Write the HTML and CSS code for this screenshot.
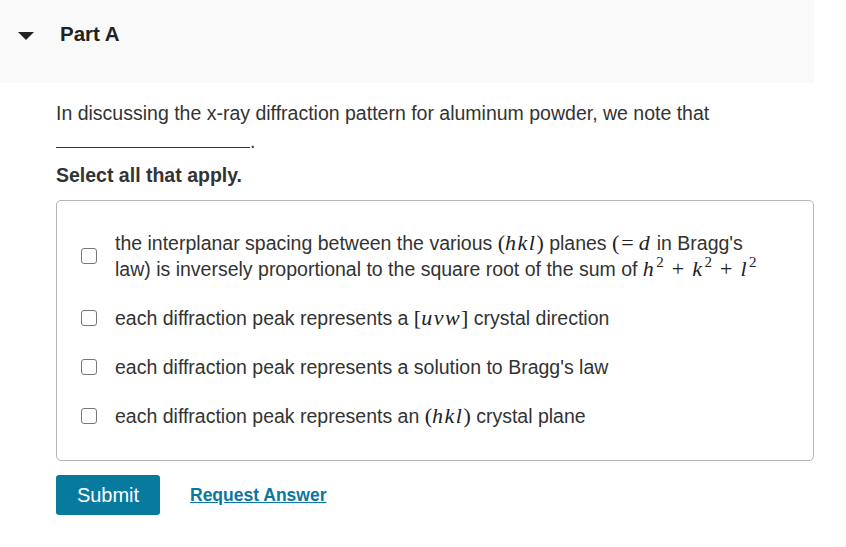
FILE: index.html
```html
<!DOCTYPE html>
<html>
<head>
<meta charset="utf-8">
<link rel="stylesheet" href="styles.css">
</head>
<body>
<div class="header">
  <span class="caret"></span>
  <span class="part">Part A</span>
</div>
<div class="content">
  <p class="question">In discussing the x-ray diffraction pattern for aluminum powder, we note that<br><span class="blank"></span>.</p>
  <p class="instr">Select all that apply.</p>
  <div class="box">
    <label class="opt">
      <span class="cb"></span>
      <span class="txt">the interplanar spacing between the various <span class="m">(<i>hkl</i>)</span> planes <span class="m">(<span class="rel">=</span><i>d</i></span> in Bragg's law) is inversely proportional to the square root of the sum of <span class="m"><i>h</i><sup>2</sup><span class="bin">+</span><i>k</i><sup>2</sup><span class="bin">+</span><i>l</i><sup>2</sup></span></span>
    </label>
    <label class="opt">
      <span class="cb"></span>
      <span class="txt">each diffraction peak represents a <span class="m">[<i>uvw</i>]</span> crystal direction</span>
    </label>
    <label class="opt">
      <span class="cb"></span>
      <span class="txt">each diffraction peak represents a solution to Bragg's law</span>
    </label>
    <label class="opt">
      <span class="cb"></span>
      <span class="txt">each diffraction peak represents an <span class="m">(<i>hkl</i>)</span> crystal plane</span>
    </label>
  </div>
  <div class="actions">
    <button class="submit">Submit</button>
    <a class="req" href="#">Request Answer</a>
  </div>
</div>
</body>
</html>
```
FILE: styles.css
```css
html, body {
  margin: 0;
  padding: 0;
  background: #fff;
}
body {
  font-family: "Liberation Sans", Arial, sans-serif;
  color: #333;
  font-size: 19.5px;
}
.header {
  width: 814px;
  height: 83px;
  background: #f9f9f9;
  display: flex;
  align-items: center;
  padding-bottom: 15px;
  box-sizing: border-box;
}
.caret {
  width: 0;
  height: 0;
  border-left: 8px solid transparent;
  border-right: 8px solid transparent;
  border-top: 8px solid #222;
  margin-left: 18px;
  margin-top: 3px;
}
.part {
  margin-left: 26px;
  font-weight: bold;
  font-size: 20.5px;
  color: #222;
}
.content {
  padding-left: 56px;
  width: 758px;
}
.question {
  margin: 16px 0 0 0;
  line-height: 28px;
}
.blank {
  display: inline-block;
  width: 194px;
  border-bottom: 1px solid #333;
  height: 6px;
  vertical-align: baseline;
}
.instr {
  margin: 6px 0 0 0;
  font-weight: bold;
  line-height: 28px;
}
.box {
  margin-top: 11px;
  border: 1px solid #b5b5b5;
  border-radius: 5px;
  padding: 29px 44px 31px 24px;
  display: flex;
  flex-direction: column;
  gap: 23px;
}
.opt {
  display: flex;
  align-items: center;
  gap: 18px;
  line-height: 26px;
}
.cb {
  flex: none;
  width: 14px;
  height: 14px;
  border: 1.5px solid #777;
  border-radius: 3px;
  background: #fff;
}
.txt {
  flex: 1;
}
.m {
  font-family: "Liberation Serif", "DejaVu Serif", serif;
  font-size: 22px;
  line-height: 1;
  white-space: nowrap;
  color: #222;
}
.m i {
  font-style: italic;
  letter-spacing: 1.5px;
}
.rel {
  margin: 0 5px 0 2px;
}
.bin {
  margin: 0 8px;
}
.m sup {
  font-size: 15px;
  line-height: 0;
  vertical-align: 9px;
  margin-left: 1px;
}
.actions {
  margin-top: 14px;
  display: flex;
  align-items: center;
  gap: 30px;
}
.submit {
  width: 104px;
  height: 40px;
  background: #087a9e;
  color: #fff;
  border: none;
  border-radius: 3px;
  font-family: "Liberation Sans", Arial, sans-serif;
  font-size: 20px;
  padding: 0;
}
.req {
  color: #0a779c;
  font-weight: bold;
  font-size: 17.5px;
  text-decoration: underline;
}
```
